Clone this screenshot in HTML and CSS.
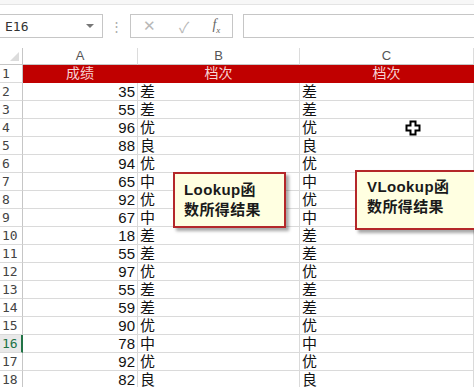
FILE: index.html
```html
<!DOCTYPE html>
<html lang="zh">
<head>
    <meta charset="UTF-8">
    <title>Lookup 与 VLookup</title>
    <link rel="stylesheet" href="styles.css">
</head>
<body>
    <div class="topline"></div>
    <div class="formula-bar">
        <div class="name-box">
            <span>E16</span>
            <span class="drop"></span>
        </div>
        <div class="dots">⋮</div>
        <div class="btn-box">
            <span class="ico">✕</span>
            <span class="ico">✓</span>
            <span class="ico fx">f<sub>x</sub></span>
        </div>
        <div class="formula-input"></div>
    </div>

    <div class="sheet">
        <div class="row head">
            <div class="rh corner"><span class="tri"></span></div>
            <div class="ch">A</div>
            <div class="ch">B</div>
            <div class="ch">C</div>
        </div>
        <div class="row title">
            <div class="rh">1</div>
            <div class="c mid">成绩</div>
            <div class="c mid">档次</div>
            <div class="c mid">档次</div>
        </div>
        <div id="rows"></div>

        <div class="note note-b">Lookup函<br>数所得结果</div>
        <div class="note note-c">VLookup函<br>数所得结果</div>
        <svg class="cursor" width="16" height="16" viewBox="0 0 16 16">
            <path d="M5.5 1.5h5v4h4v5h-4v4h-5v-4h-4v-5h4z" fill="#fff" stroke="#000" stroke-width="2"/>
        </svg>
    </div>

<script>
    var data = [
        [35, "差"], [55, "差"], [96, "优"], [88, "良"], [94, "优"], [65, "中"],
        [92, "优"], [67, "中"], [18, "差"], [55, "差"], [97, "优"], [55, "差"],
        [59, "差"], [90, "优"], [78, "中"], [92, "优"], [82, "良"]
    ];
    var html = "";
    for (var i = 0; i < data.length; i++) {
        var n = i + 2;
        html += '<div class="row' + (n == 16 ? ' sel' : '') + '">' +
            '<div class="rh">' + n + '</div>' +
            '<div class="c num">' + data[i][0] + '</div>' +
            '<div class="c">' + data[i][1] + '</div>' +
            '<div class="c">' + data[i][1] + '</div>' +
            '</div>';
    }
    document.getElementById("rows").innerHTML = html;
</script>
</body>
</html>
```

FILE: styles.css
```css
body {
    margin: 0;
    width: 474px;
    height: 387px;
    overflow: hidden;
    background: #fff;
    font-family: "Liberation Sans", "Noto Sans CJK SC", sans-serif;
    color: #222;
}
.topline {
    height: 4px;
    border-bottom: 1px solid #e4e4e4;
    background: #f7f7f7;
}
.formula-bar {
    display: flex;
    align-items: center;
    height: 24px;
    margin-top: 9px;
    margin-bottom: 10px;
}
.name-box {
    width: 103px;
    height: 24px;
    box-sizing: border-box;
    border: 1px solid #c6c6c6;
    border-left: none;
    display: flex;
    align-items: center;
    justify-content: space-between;
    padding: 0 8px 0 5px;
    font-family: "DejaVu Sans Mono", monospace;
    font-size: 13px;
    color: #333;
}
.drop {
    width: 0;
    height: 0;
    border-left: 4px solid transparent;
    border-right: 4px solid transparent;
    border-top: 4px solid #777;
}
.dots {
    width: 27px;
    text-align: center;
    color: #aaa;
    font-size: 13px;
}
.btn-box {
    width: 103px;
    height: 24px;
    box-sizing: border-box;
    border: 1px solid #c6c6c6;
    display: flex;
    align-items: center;
    justify-content: space-around;
    color: #b8b8b8;
    font-size: 15px;
}
.fx {
    font-family: "Liberation Serif", serif;
    font-style: italic;
    color: #666;
    font-size: 14px;
}
.fx sub {
    font-size: 9px;
}
.formula-input {
    flex: 1;
    margin-left: 10px;
    height: 24px;
    box-sizing: border-box;
    border: 1px solid #c6c6c6;
    border-right: none;
}
.sheet {
    position: relative;
}
.row {
    display: grid;
    grid-template-columns: 23px 115px 162px 1fr;
    height: 18px;
}
.row > div {
    box-sizing: border-box;
    border-right: 1px solid #dadada;
    border-bottom: 1px solid #dadada;
    height: 18px;
    line-height: 17px;
    white-space: nowrap;
    overflow: hidden;
}
.rh {
    font-family: "DejaVu Sans Mono", monospace;
    font-size: 13px;
    color: #444;
    padding-left: 2px;
    background: #fff;
    border-right-color: #c6c6c6 !important;
}
.c {
    font-size: 15px;
    padding: 0 2px;
    color: #111;
}
.num {
    text-align: right;
}
.mid {
    text-align: center;
}
.head {
    height: 17px;
}
.head > div {
    height: 17px;
    line-height: 16px;
    border-bottom-color: #c6c6c6;
}
.ch {
    text-align: center;
    font-size: 13px;
    color: #555;
    border-right-color: #dcdcdc !important;
}
.corner {
    position: relative;
}
.tri {
    position: absolute;
    right: 3px;
    bottom: 3px;
    border-left: 9px solid transparent;
    border-bottom: 9px solid #dcdcdc;
}
.title .c {
    background: #c00000;
    color: #f6d4d4;
    border-color: #c00000;
    font-size: 14px;
}
.sel .rh {
    color: #217346;
    background: #e9e9e9;
    border-right: 2px solid #217346 !important;
}
.note {
    position: absolute;
    box-sizing: border-box;
    background: #ffffe1;
    border: 2px solid #b4282a;
    box-shadow: 3px 3px 3px rgba(0, 0, 0, 0.35);
    font-size: 15px;
    font-weight: bold;
    letter-spacing: 0.4px;
    line-height: 20px;
    color: #1a1a1a;
    padding: 6px 0 0 9px;
}
.note-b {
    left: 173px;
    top: 124px;
    width: 113px;
    height: 56px;
}
.note-c {
    left: 355px;
    top: 122px;
    width: 122px;
    height: 60px;
    padding-top: 5px;
    padding-left: 10px;
}
.cursor {
    position: absolute;
    left: 405px;
    top: 72px;
}
```
